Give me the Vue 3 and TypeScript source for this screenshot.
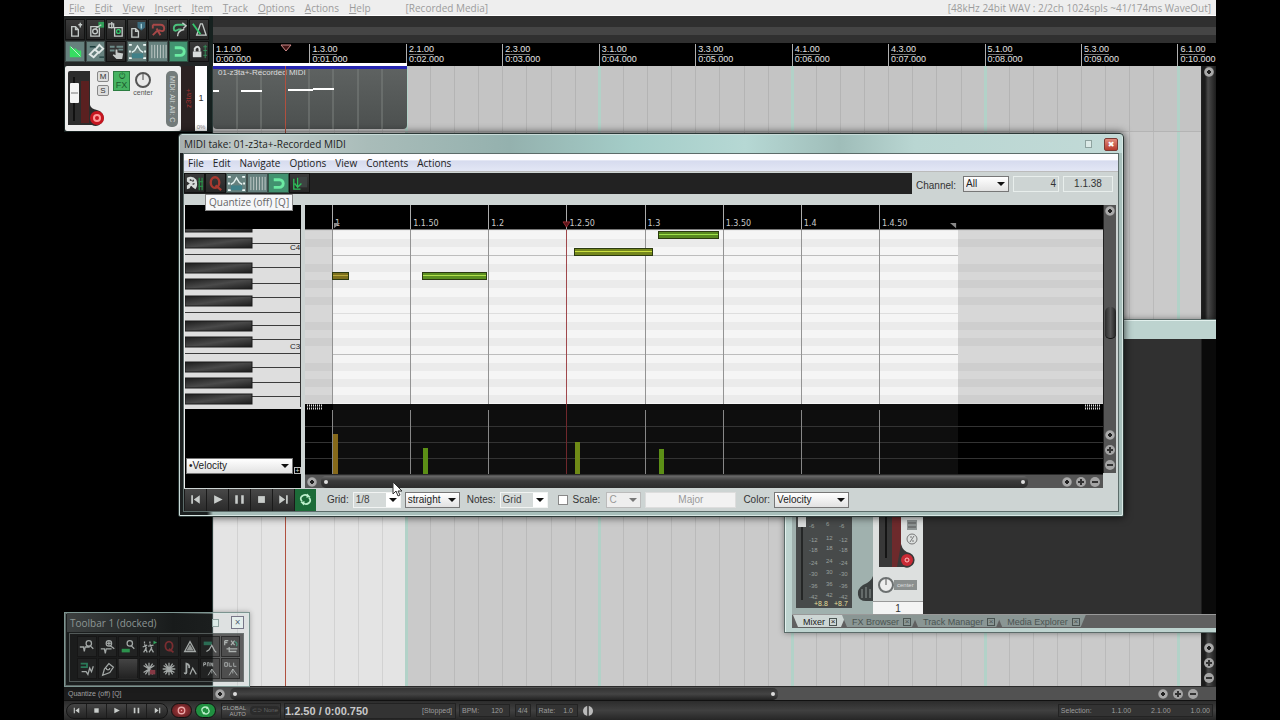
<script setup lang="ts">
import { ref } from 'vue'

interface Shape { d: string; c?: string; f?: string; w?: number }
interface Tool { name: string; shapes: Shape[]; tone?: string }

const G = '#35c46c'
const W = '#c4cac8'

const mainMenu: string[] = ['File', 'Edit', 'View', 'Insert', 'Item', 'Track', 'Options', 'Actions', 'Help']
const midiMenu: string[] = ['File', 'Edit', 'Navigate', 'Options', 'View', 'Contents', 'Actions']

const gridIcon: Shape[] = [{ d: 'M3 3V17M6 3V17M9 3V17M12 3V17M15 3V17M18 3V17', c: '#c2cac8', w: 1 }]
const snapIcon: Shape[] = [{ d: 'M5 6H11A4 4 0 0 1 11 14H5', c: '#6beaa2', w: 3 }]
const envIcon: Shape[] = [
  { d: 'M1 3H4M16 3H19M1 17H4M16 17H19M1 10H3M17 10H19', c: '#eef8f6', w: 2 },
  { d: 'M4 11L7 9L10 4L13 9L16 11', c: '#e4f2f0', w: 1.5 },
  { d: 'M4 12H16V17H4Z', f: '#3f8088' },
]

const mainTools: Tool[] = [
  { name: 'New project', shapes: [{ d: 'M6 7H10L13 10V17H6ZM10 7V10H13', c: W }, { d: 'M15 3V8M13 5H17', c: W }] },
  { name: 'Open project', shapes: [{ d: 'M4 7H13V17H4ZM6 12A2 2 0 1 0 11 12A2 2 0 1 0 6 12', c: W }, { d: 'M12 2H18V8H12Z', f: '#2f9d57' }, { d: 'M9 9L15 5', c: W }] },
  { name: 'Save project', shapes: [{ d: 'M8 8H16V17H8Z', c: W }, { d: 'M2 4H7V8H2ZM5 2V9', c: W }, { d: 'M10 12A2 2 0 1 0 14 12A2 2 0 1 0 10 12', c: G }] },
  { name: 'Project settings', shapes: [{ d: 'M4 9H8L11 12V18H4ZM8 9V12H11', c: W }, { d: 'M10 2H18V8L14 11L10 8Z', f: '#3b6b7d' }, { d: 'M14 4V9', c: '#a6d0da' }] },
  { name: 'Undo', shapes: [{ d: 'M4 5H12Q16 5 16 9T11 11L8 12L4 16M4 5V9M8 9L12 16', c: '#a84848', w: 2 }] },
  { name: 'Redo', shapes: [{ d: 'M16 5H8Q4 5 4 9T9 10H12', c: '#4cbf7b', w: 2 }, { d: 'M13 3L17 6L14 9M8 17Q8 11 15 10', c: W }] },
  { name: 'Metronome', shapes: [{ d: 'M7 16L11 4L13 4L17 16Z', c: W }, { d: 'M11 15L3 4', c: G, w: 2 }] },
  { name: 'Auto-crossfade', tone: 'on', shapes: [{ d: 'M4 16V4L9 8V6L13 9L16 9V16Z', f: '#37dd62' }, { d: 'M5 5L15 15', c: '#bff5cf', w: 1 }] },
  { name: 'Item grouping', tone: 'on', shapes: [{ d: 'M3 13L8 8L12 11L7 16ZM8 9L13 3L17 7L12 12', c: '#e0e8e6', w: 2 }, { d: 'M3 5L9 5M13 16H18', c: '#1e3f3e' }] },
  { name: 'Ripple editing', shapes: [{ d: 'M3 5H8M10 5H17M3 9H8M12 8H17', c: '#6d8a88', w: 2 }, { d: 'M9 8V14L7 13L6 14L10 18H16L17 12L11 11V8Z', f: '#c8cccb' }] },
  { name: 'Envelopes', tone: 'on', shapes: envIcon },
  { name: 'Grid', tone: 'on', shapes: gridIcon },
  { name: 'Snap', tone: 'green', shapes: snapIcon },
  { name: 'Lock', shapes: [{ d: 'M3 10H12V16H3Z', f: '#dadddc' }, { d: 'M5 10V7Q8 3 10 7V10', c: '#dadddc', w: 2 }, { d: 'M16 3V17M14 5H18M14 9H18M14 14H18', c: '#35905a', w: 1 }] },
]

const midiTools: Tool[] = [
  { name: 'Filter', shapes: [{ d: 'M2 4Q8 1 12 6Q14 12 11 16L8 14Q6 11 5 15L2 16V12L5 10L2 8Z', f: '#d8dcda' }, { d: 'M5 6L7 7M9 6L8 8M10 10L8 11', c: '#333' }, { d: 'M15 4V17M18 4V17M14 8H19M14 13H19', c: '#2b8a47' }] },
  { name: 'Quantize', shapes: [{ d: 'M5 9A4 5 0 1 0 14 9A4 5 0 1 0 5 9M10 12L16 17', c: '#a8392f', w: 2.5 }] },
  { name: 'Envelopes', tone: 'on', shapes: envIcon },
  { name: 'Grid', tone: 'on', shapes: gridIcon },
  { name: 'Snap', tone: 'green', shapes: snapIcon },
  { name: 'Step input', shapes: [{ d: 'M9 3H18V14H9Z', f: '#3d4342' }, { d: 'M4 5V16H11M8 4V13M5 10L8 14L12 10', c: '#2fc05a' }] },
]

const dockTools: Tool[] = [
  { name: 'Zoom out item', shapes: [{ d: 'M2 10L6 10L7 15L8 10H13M9 6A3 3 0 1 0 15 6A3 3 0 1 0 9 6M14 9L17 12', c: W }] },
  { name: 'Zoom selection', shapes: [{ d: 'M2 12L6 12L7 17L8 12H14M8 6A3 3 0 1 0 14 6A3 3 0 1 0 8 6M13 9L17 12M11 4V8M9 6H13', c: W }] },
  { name: 'Zoom project', shapes: [{ d: 'M9 6A3 3 0 1 0 15 6A3 3 0 1 0 9 6M14 9L17 12', c: W }, { d: 'M3 12H12V16H3Z', f: '#2fae58' }] },
  { name: 'Walk', shapes: [{ d: 'M5 4V6M5 7L7 11L4 16M6 11L8 16M3 10L8 8M11 4V6M11 7L13 11L10 16M12 11L15 16M9 9L15 8', c: W }, { d: 'M15 3L19 5L15 7Z', f: G }] },
  { name: 'Quantize', shapes: [{ d: 'M6 9A4 5 0 1 0 14 9A4 5 0 1 0 6 9M10 12L15 16', c: '#8f3034', w: 2 }] },
  { name: 'Normalize', shapes: [{ d: 'M4 15L10 4L16 15Z', c: W }, { d: 'M6 14L10 7L14 14Z', f: '#aeb3b1' }] },
  { name: 'Volume envelope', shapes: [{ d: 'M3 4H12V8H3Z', f: '#2e7f61' }, { d: 'M6 15L9 13L12 8L15 14L17 16', c: W }] },
  { name: 'Effects', shapes: [{ d: 'M3 3H7M3 3V8M3 5H6M10 3L14 8M14 3L10 8M5 12H17M8 10V15H16', c: W }, { d: 'M14 4Q18 5 16 9', c: '#45a382' }] },
  { name: 'Nudge', shapes: [{ d: 'M3 4H10V8H3', c: '#2c8f66', w: 2 }, { d: 'M4 13H9L11 16L13 9L15 13L17 7', c: W }] },
  { name: 'Pencil', shapes: [{ d: 'M4 17L6 10L11 4L16 8L12 14ZM8 9A2 2 0 1 0 12 9', c: W }] },
  { name: 'Blank', tone: 'blank', shapes: [] },
  { name: 'Freeze', shapes: [{ d: 'M4 6L16 14M16 6L4 14M10 3V17M6 4L14 16M14 4L6 16', c: W }, { d: 'M11 11H17V16H11Z', f: '#9f3f4d' }] },
  { name: 'Unfreeze', shapes: [{ d: 'M4 6L16 14M16 6L4 14M10 3V17M3 10H17M6 4L14 16M14 4L6 16', c: W }] },
  { name: 'Note envelope', shapes: [{ d: 'M6 14V4Q10 5 9 9M4 14A1 1 0 1 0 6 14', c: W, w: 2 }, { d: 'M10 16L13 9L17 16', c: W }] },
  { name: 'Pan envelope', shapes: [{ d: 'M3 3V7M3 3H5V5H3M7 7V3H9V7M11 7V3L13 7V3M8 17L12 10L17 17M12 10V15', c: W, w: 1 }] },
  { name: 'Solo envelope', shapes: [{ d: 'M3 3V7H6V3ZM8 3V7H11M13 3V7H16M8 17L12 10L17 17M12 10V15', c: W, w: 1 }] },
]

const transportIcons: Tool[] = [
  { name: 'Go to start', shapes: [{ d: 'M5 5H7V15H5ZM15 5V15L8 10Z', f: '#c9cdcb' }] },
  { name: 'Stop', shapes: [{ d: 'M6 6H14V14H6Z', f: '#c9cdcb' }] },
  { name: 'Play', shapes: [{ d: 'M6 5L16 10L6 15Z', f: '#c9cdcb' }] },
  { name: 'Pause', shapes: [{ d: 'M5 5H8V15H5ZM12 5H15V15H12Z', f: '#c9cdcb' }] },
  { name: 'Go to end', shapes: [{ d: 'M5 5L12 10L5 15ZM13 5H15V15H13Z', f: '#c9cdcb' }] },
]
const repeatShapes: Shape[] = [{ d: 'M6 12A5 4 0 0 1 13 6M14 8A5 4 0 0 1 7 14', c: '#bdf0cb', w: 2 }, { d: 'M12 3L16 7L11 8ZM8 17L4 13L9 12Z', f: '#bdf0cb' }]
const midiTransport: Tool[] = [
  transportIcons[0], transportIcons[2], transportIcons[3], transportIcons[1], transportIcons[4],
  { name: 'Repeat', tone: 'rep', shapes: repeatShapes },
]

const rulerMarks: [string, string][] = [
  ['1.1.00', '0:00.000'], ['1.3.00', '0:01.000'], ['2.1.00', '0:02.000'], ['2.3.00', '0:03.000'],
  ['3.1.00', '0:04.000'], ['3.3.00', '0:05.000'], ['4.1.00', '0:06.000'], ['4.3.00', '0:07.000'],
  ['5.1.00', '0:08.000'], ['5.3.00', '0:09.000'], ['6.1.00', '0:10.000'],
]
const midiMarks: string[] = ['1', '1.1.50', '1.2', '1.2.50', '1.3', '1.3.50', '1.4', '1.4.50']

// Arrange grid: four lines for each ruler mark.
const arrangeLines = Array.from({ length: 41 }, (_, i) => ({ x: Math.round((i * 9646) / 400), bar: i % 8 === 0 && i > 0 }))

// Piano roll rows, top of D#4 first; each row is 1/12 of an octave of 98.5px.
const rowTop = (i: number): number => (i * 98.5) / 12 - 7
const blackRows = [0, 2, 5, 7, 9, 12, 14, 17, 19, 21]
const keySplits = [14, 38, 54, 68, 83, 96, 110, 138, 153, 167]
const midiLines = Array.from({ length: 9 }, (_, i) => 28 + Math.round((i * 625) / 8))
const notes = [
  { x: 27, w: 17, row: 6, c: '#7d701d', hi: '#b8aa3a' },
  { x: 117, w: 65, row: 6, c: '#5b8f20', hi: '#b2e04c' },
  { x: 269, w: 79, row: 3, c: '#74861d', hi: '#cbe040' },
  { x: 353, w: 61, row: 1, c: '#58881f', hi: '#9fe04a' },
]
const velocities = [
  { x: 28, y: 30, c: '#86691a' }, { x: 118, y: 44, c: '#5c8f16' },
  { x: 270, y: 38, c: '#6f8a16' }, { x: 354, y: 45, c: '#5c8f16' },
]
const meterScale: [string, number][] = [['6', 10], ['12', 24], ['18', 34], ['24', 47], ['30', 58], ['36', 70], ['42', 81]]
const tabs: string[] = ['Mixer', 'FX Browser', 'Track Manager', 'Media Explorer']

const lane = ref('•Velocity')
const channel = ref('All')
const spacing = ref('straight')
const colorBy = ref('Velocity')
const gridSize = ref('1/8')
const noteSize = ref('Grid')
const root = ref('C')
const useScale = ref(false)
</script>

<template>
  <div class="app">
    <main class="daw">
      <nav class="menubar">
        <button v-for="m in mainMenu" :key="m"><u>{{ m[0] }}</u>{{ m.slice(1) }}</button>
        <span class="project">[Recorded Media]</span>
        <span class="device">[48kHz 24bit WAV : 2/2ch 1024spls ~41/174ms WaveOut]</span>
      </nav>

      <section class="workspace">
        <div class="toolbar">
          <button v-for="t in mainTools" :key="t.name" :class="['tool', t.tone]" :aria-label="t.name">
            <svg viewBox="0 0 20 20"><path v-for="s in t.shapes" :key="s.d" :d="s.d" :stroke="s.c || 'none'" :fill="s.f || 'none'" :stroke-width="s.w || 1.4" /></svg>
          </button>
        </div>

        <div class="timeline">
          <div class="band"></div>
          <div class="ruler">
            <div v-for="m in rulerMarks" :key="m[0]" class="mark"><b>{{ m[0] }}</b><span>{{ m[1] }}</span></div>
            <i class="loop"></i>
            <svg class="playmark" viewBox="0 0 12 8"><path d="M1 1H11L6 7Z" fill="#401414" stroke="#d08a8a" /></svg>
          </div>
        </div>

        <div class="tracks">
          <div class="track">
            <div class="panel">
              <svg class="fader" viewBox="0 0 38 56">
                <path d="M0 2Q0 0 2 0H22V34Q23 38 29 39A8 8 0 1 1 24 54H0Z" fill="#2c2c2c" />
                <path d="M13 10H21V52H13Z" fill="#5a2020" />
                <path d="M6 6V50" stroke="#111" stroke-width="2" />
                <rect x="2" y="12" width="9" height="20" rx="1" fill="#f4f4f4" /><path d="M3 22H10" stroke="#777" />
                <circle cx="29" cy="47" r="7" fill="#c61620" /><circle cx="29" cy="47" r="3" fill="none" stroke="#ff9a9a" stroke-width="2" />
              </svg>
              <div class="ms"><button>M</button><button>S</button></div>
              <button class="fx"><span>⏻</span>FX</button>
              <div class="pan">
                <svg viewBox="0 0 18 18"><circle cx="9" cy="9" r="7" fill="#e9e9e9" stroke="#555" stroke-width="2" /><path d="M9 3V9" stroke="#444" /></svg>
                <span>center</span>
              </div>
              <div class="input"><span>MIDI: All: All: C</span></div>
            </div>
            <div class="instr"><span>z3ta+</span></div>
            <div class="index">1<small>0%</small></div>
          </div>
        </div>

        <div class="arrange">
          <div class="canvas">
            <svg class="lines" viewBox="0 0 988 620" preserveAspectRatio="none">
              <rect width="988" height="620" fill="#cacaca" />
              <rect width="988" height="65" fill="#c4c4c4" />
              <rect y="66" width="194" height="554" fill="#e4e4e4" />
              <rect v-for="l in arrangeLines" :key="l.x" :x="l.bar ? l.x - 1 : l.x" y="0" :width="l.bar ? 3 : 1" height="620" :fill="l.bar ? '#b2d2c8' : '#000'" :opacity="l.bar ? 1 : 0.08" />
              <rect y="65" width="988" height="1" fill="#b4b4b4" />
            </svg>
            <div class="item">
              <span>01-z3ta+-Recorded MIDI</span>
              <svg viewBox="0 0 194 60" preserveAspectRatio="none">
                <path d="M24 0V60M48 0V60M96 0V60M120 0V60M145 0V60M169 0V60" stroke="#7c817f" />
                <path d="M0 22H6M28 22H49M75 21H100M100 20H121" stroke="#fff" stroke-width="2" />
              </svg>
            </div>
            <i class="playhead"></i>
          </div>
          <div class="vscroll main">
            <button class="knob up" aria-label="Scroll up"></button>
            <i class="grow"></i>
            <button class="knob down" aria-label="Scroll down"></button>
            <button class="knob plus" aria-label="Zoom in"></button>
            <button class="knob minus" aria-label="Zoom out"></button>
          </div>
        </div>

        <div class="status">Quantize (off) [Q]</div>
        <div class="hscroll main">
          <button class="knob left" aria-label="Scroll left"></button>
          <div class="thumb"><i></i><i></i></div>
          <span class="grow"></span>
          <button class="knob right" aria-label="Scroll right"></button>
          <button class="knob plus" aria-label="Zoom in"></button>
          <button class="knob minus" aria-label="Zoom out"></button>
        </div>
      </section>

      <footer class="transport">
        <div class="pill">
          <button v-for="t in transportIcons" :key="t.name" :aria-label="t.name">
            <svg viewBox="0 0 20 20"><path v-for="s in t.shapes" :key="s.d" :d="s.d" :fill="s.f" /></svg>
          </button>
        </div>
        <button class="round rec" aria-label="Record"><svg viewBox="0 0 20 20"><circle cx="10" cy="10" r="5" fill="none" stroke="#e9a9a9" stroke-width="2" /><circle cx="10" cy="10" r="1" fill="#e9a9a9" /></svg></button>
        <button class="round rep" aria-label="Repeat"><svg viewBox="0 0 20 20"><path v-for="s in repeatShapes" :key="s.d" :d="s.d" :stroke="s.c || 'none'" :fill="s.f || 'none'" :stroke-width="s.w || 1" /></svg></button>
        <button class="auto"><span>GLOBAL<br>AUTO</span><em>⊂⊃ None</em></button>
        <div class="clock"><b>1.2.50 / 0:00.750</b><span>[Stopped]</span></div>
        <div class="box">BPM:<span class="val">120</span></div>
        <div class="box">4/4</div>
        <div class="box">Rate:<span class="val near">1.0</span></div>
        <button class="rate" aria-label="Playback rate"></button>
        <div class="box sel">Selection:<span>1.1.00</span><span>2.1.00</span><span>1.0.00</span></div>
      </footer>

      <section class="mixer" aria-label="Mixer">
        <div class="mixbody">
          <div class="master">
            <svg class="meter" viewBox="0 0 56 92">
              <rect width="56" height="92" fill="#474a4a" />
              <path d="M6 0V84" stroke="#242626" stroke-width="2" />
              <rect x="2" y="0" width="8" height="11" fill="#d9dcdb" />
              <template v-for="s in meterScale" :key="s[0]">
                <text x="13" :y="s[1] + 2" class="tick">-{{ s[0] }}</text>
                <text x="30" :y="s[1]" class="tick">{{ s[0] }}</text>
                <text x="43" :y="s[1] + 2" class="tick">-{{ s[0] }}</text>
              </template>
              <text x="18" y="90" class="peak">+8.8</text><text x="38" y="90" class="peak">+8.7</text>
            </svg>
            <svg class="bars" viewBox="0 0 16 26"><path d="M16 0Q14 6 6 9Q0 13 1 19Q2 25 9 25H16Z" fill="#3c4141" /><path d="M5 13V22M9 11V22M13 13V22" stroke="#8d9694" /></svg>
          </div>
          <div class="strip">
            <svg viewBox="0 0 50 85">
              <path d="M6 0H28V28Q30 36 37 37A7 7 0 1 1 31 51H6Z" fill="#383838" />
              <path d="M19 0H28V28L24 51H19Z" fill="#6d2a2c" /><path d="M13 0V42" stroke="#151515" stroke-width="2" />
              <circle cx="34" cy="44" r="6" fill="#c92a35" /><circle cx="34" cy="44" r="2" fill="none" stroke="#ffc0c0" />
              <rect x="34" y="4" width="10" height="10" fill="#8e9493" /><path d="M35 7H43M35 11H43" stroke="#555" />
              <circle cx="39" cy="23" r="5" fill="none" stroke="#777" /><path d="M37 26L41 20M37 21H39M39 25H41" stroke="#777" />
              <circle cx="13" cy="69" r="7" fill="#eee" stroke="#6c7070" stroke-width="2" /><path d="M13 63V69" stroke="#555" />
              <rect x="21" y="64" width="23" height="10" fill="#8a8f8e" /><text x="24" y="71" class="cen">center</text>
            </svg>
            <span class="no">1</span>
          </div>
          <div class="empty"></div>
        </div>
        <nav class="tabs">
          <button v-for="(t, i) in tabs" :key="t" :class="{ active: i === 0 }"><span>{{ t }}</span><i>×</i></button>
        </nav>
      </section>

      <section class="dock" aria-label="Toolbar 1">
        <header><span>Toolbar 1 (docked)</span><i class="pin"></i><button aria-label="Close">×</button></header>
        <div class="dockgrid">
          <button v-for="(t, i) in dockTools" :key="i" :class="['dtool', t.tone]" :aria-label="t.name">
            <svg viewBox="0 0 20 20"><path v-for="s in t.shapes" :key="s.d" :d="s.d" :stroke="s.c || 'none'" :fill="s.f || 'none'" :stroke-width="s.w || 1.4" /></svg>
          </button>
        </div>
      </section>

      <section class="midi" aria-label="MIDI editor">
        <header class="title"><span>MIDI take: 01-z3ta+-Recorded MIDI</span><i class="pin"></i><button aria-label="Close">✖</button></header>
        <div class="client">
          <nav class="midimenu"><button v-for="m in midiMenu" :key="m">{{ m }}</button></nav>
          <div class="midibar">
            <div class="midtools">
              <button v-for="t in midiTools" :key="t.name" :class="['tool', t.tone]" :aria-label="t.name">
                <svg viewBox="0 0 20 20"><path v-for="s in t.shapes" :key="s.d" :d="s.d" :stroke="s.c || 'none'" :fill="s.f || 'none'" :stroke-width="s.w || 1.4" /></svg>
              </button>
            </div>
            <label class="chan" for="chan">Channel:</label>
            <div class="pick w46"><select id="chan" v-model="channel"><option>All</option></select></div>
            <output class="field right">4</output>
            <output class="field">1.1.38</output>
          </div>

          <div class="editor">
            <div class="keys">
              <div class="corner"></div>
              <svg class="piano" viewBox="0 0 116 178" preserveAspectRatio="none">
                <defs><linearGradient id="ebony" x1="0" y1="0" x2="1" y2="1"><stop offset="0" stop-color="#1c1c1c" /><stop offset="0.5" stop-color="#4a4a4a" /><stop offset="1" stop-color="#1c1c1c" /></linearGradient></defs>
                <rect width="116" height="178" fill="#dedede" />
                <path v-for="y in keySplits" :key="y" :d="`M${y === 83 ? 0 : 66} ${y}.5H116`" stroke="#3c3c3c" />
                <path d="M0 25.5H116M0 124.5H116" stroke="#3c3c3c" />
                <rect v-for="r in blackRows" :key="r" x="0" :y="Math.round(rowTop(r))" width="67" height="10" fill="url(#ebony)" stroke="#1a1a1a" />
                <text x="105" y="21" class="cname">C4</text><text x="105" y="120" class="cname">C3</text>
                <path d="M115.5 0V178" stroke="#333" />
              </svg>
              <div class="lane">
                <div class="pick velo"><select v-model="lane" aria-label="CC lane"><option>•Velocity</option></select></div>
                <button aria-label="Add lane">+</button>
              </div>
            </div>

            <div class="roll">
              <div class="mruler">
                <i></i>
                <div class="cells"><span v-for="m in midiMarks" :key="m">{{ m }}</span></div>
                <svg class="endmark" viewBox="0 0 10 8"><path d="M1 1H8V7Z" fill="#888" /></svg>
                <svg class="startmark" viewBox="0 0 10 8"><path d="M1 1H8L1 7Z" fill="#888" /></svg>
                <svg class="playflag" viewBox="0 0 10 8"><path d="M1 1H9L5 7Z" fill="#5a1418" stroke="#a03038" /></svg>
              </div>
              <svg class="notes" viewBox="0 0 798 174" preserveAspectRatio="none">
                <rect width="798" height="174" fill="#f5f5f5" />
                <rect v-for="r in blackRows" :key="r" x="0" :y="Math.round(rowTop(r))" width="798" height="8" fill="#ebebeb" />
                <rect width="28" height="174" fill="#000" opacity="0.12" /><rect x="653" width="145" height="174" fill="#000" opacity="0.12" />
                <path d="M28 25.5H653M28 124.5H653" stroke="#bdbdbd" />
                <path d="M28 83.5H653" stroke="#dedede" />
                <rect v-for="x in midiLines.slice(0, 8)" :key="x" :x="x - 1" width="1" height="174" fill="#939393" />
                <g v-for="n in notes" :key="n.x">
                  <rect :x="n.x" :y="Math.round(rowTop(n.row))" :width="n.w" height="8" fill="#2b3a10" />
                  <rect :x="n.x + 1" :y="Math.round(rowTop(n.row)) + 1" :width="n.w - 2" height="6" :fill="n.c" />
                  <rect :x="n.x + 1" :y="Math.round(rowTop(n.row)) + 3" :width="n.w - 2" height="1" :fill="n.hi" />
                </g>
                <rect x="261" width="1" height="174" fill="#a0484c" />
              </svg>
              <svg class="velocity" viewBox="0 0 798 70" preserveAspectRatio="none">
                <rect width="798" height="70" fill="#000" /><rect x="28" width="625" height="70" fill="#0e0e0e" />
                <path d="M0 22.5H798M0 38.5H798M0 54.5H798" stroke="#333" />
                <rect v-for="x in midiLines.slice(0, 8)" :key="x" :x="x - 1" y="6" width="1" height="64" fill="#878787" />
                <rect x="261" width="1" height="70" fill="#70282c" />
                <rect v-for="v in velocities" :key="v.x" :x="v.x" :y="v.y" width="5" :height="70 - v.y" :fill="v.c" />
                <path d="M2 1.5H18M2 4.5H18M780 1.5H796M780 4.5H796" stroke="#ddd" stroke-width="2" stroke-dasharray="1 1" />
              </svg>
              <div class="hscroll">
                <button class="knob left" aria-label="Scroll left"></button>
                <div class="thumb"><i></i><i></i></div>
                <span class="gap"></span>
                <button class="knob right" aria-label="Scroll right"></button>
                <button class="knob plus" aria-label="Zoom in"></button>
                <button class="knob minus" aria-label="Zoom out"></button>
              </div>
            </div>

            <div class="vscroll side">
              <button class="knob up" aria-label="Scroll up"></button>
              <i class="grow"></i><i class="vthumb"></i><i class="grow"></i>
              <button class="knob down" aria-label="Scroll down"></button>
              <button class="knob plus" aria-label="Zoom in"></button>
              <button class="knob minus" aria-label="Zoom out"></button>
            </div>
          </div>

          <div class="foot">
            <div class="mtrans">
              <button v-for="t in midiTransport" :key="t.name" :class="t.tone" :aria-label="t.name">
                <svg viewBox="0 0 20 20"><path v-for="s in t.shapes" :key="s.d" :d="s.d" :stroke="s.c || 'none'" :fill="s.f || 'none'" :stroke-width="s.w || 1" /></svg>
              </button>
            </div>
            <label for="gridsize" class="lab">Grid:</label>
            <div class="pick combo"><select id="gridsize" v-model="gridSize"><option>1/8</option></select></div>
            <div class="pick w54"><select v-model="spacing" aria-label="Grid type"><option>straight</option></select></div>
            <label for="notesize" class="lab">Notes:</label>
            <div class="pick combo"><select id="notesize" v-model="noteSize"><option>Grid</option></select></div>
            <label class="lab check"><input v-model="useScale" type="checkbox">Scale:</label>
            <div class="pick off"><select v-model="root" disabled aria-label="Root"><option>C</option></select></div>
            <button class="major" disabled>Major</button>
            <label for="color" class="lab">Color:</label>
            <div class="pick w74"><select id="color" v-model="colorBy"><option>Velocity</option></select></div>
          </div>
        </div>
        <div class="tip" role="tooltip">Quantize (off) [Q]</div>
      </section>

      <svg class="cursor" viewBox="0 0 12 17"><path d="M1 1V13L4 10L6 15L8 14L6 10H10Z" fill="#fff" stroke="#333" /></svg>
    </main>
  </div>
</template>

<style>
html, body { background: #000; }
</style>

<style scoped>
* { box-sizing: border-box; }
button, select, input { font: inherit; color: inherit; margin: 0; padding: 0; border: 0; background: none; border-radius: 0; }
svg { display: block; }
i, em { font-style: normal; }
.app { min-height: 100vh; padding: 0 64px; background: #000; display: flex; font: 10px "Liberation Sans", Arial, sans-serif; }
.daw { flex: 1; min-width: 0; position: relative; overflow: hidden; display: flex; flex-direction: column; }

.menubar { height: 16px; background: #eeeeee; color: #9c9c9c; display: flex; align-items: center; gap: 10px; padding: 0 5px; font: 10px/14px "Open Sans", sans-serif; white-space: nowrap; border-bottom: 1px solid #fff; }
.project { margin-left: 25px; }
.device { margin-left: auto; }

.workspace { flex: 1; min-height: 0; display: grid; grid-template-columns: 149px minmax(0, 1fr); grid-template-rows: 50px minmax(0, 1fr) 14px; }
.toolbar { background: #232626; border-right: 4px solid #16211f; padding: 3px 0 4px 1px; display: grid; grid-template-columns: repeat(7, 1fr); grid-template-rows: 1fr 1fr; gap: 1px; }
.tool { background: linear-gradient(#3a3a3a, #262626); border: 1px solid #121212; padding: 0; display: grid; place-items: center; min-width: 0; }
.tool svg { width: 19px; height: 19px; }
.tool.on { background: #66817e; border-color: #3f4c4a; }
.tool.green { background: #429270; border-color: #2e5444; }

.timeline { display: flex; flex-direction: column; min-width: 0; }
.band { height: 27px; background: linear-gradient(#2f2f2f 0 11px, #454545 11px 19px, #303030 19px); }
.ruler { flex: 1; position: relative; background: #000; display: grid; grid-template-columns: repeat(10, minmax(0, 25fr)) minmax(0, 10fr); color: #e0e0e0; font: 9px/9px "Liberation Sans", sans-serif; }
.mark { border-left: 1px solid #b0b0b0; margin-top: 1px; padding: 1px 0 0 2px; display: flex; flex-direction: column; align-items: flex-start; white-space: nowrap; }
.mark b { font-weight: normal; border-bottom: 1px solid #777; }
.mark span { line-height: 8px; }
.loop { position: absolute; left: 0; bottom: 0; width: 194px; height: 3px; background: #fff; }
.playmark { position: absolute; left: 67px; top: 1px; width: 12px; height: 8px; }

.tracks { background: #000; border-right: 1px solid #2a3a38; }
.track { height: 66px; padding: 0 5px 1px 1px; display: flex; background: #16211f; }
.panel { width: 117px; background: #ededed; border-radius: 2px; display: flex; align-items: flex-start; padding: 5px 3px; gap: 2px; color: #333; }
.fader { width: 38px; height: 56px; margin-right: -11px; }
.ms { display: grid; gap: 3px; font-size: 8px; }
.ms button { width: 12px; height: 11px; line-height: 9px; background: #ddd; border: 1px solid #888; border-radius: 2px; }
.fx { width: 17px; height: 20px; margin: 0 1px 0 2px; background: #45b361; border: 1px solid #2b7d41; color: #1c5a2d; font-size: 9px; line-height: 9px; }
.fx span { display: block; font: 8px/8px "DejaVu Sans"; }
.pan { width: 20px; text-align: center; font-size: 7px; color: #555; }
.pan svg { width: 18px; height: 18px; margin: 0 auto; }
.input { width: 12px; height: 56px; margin-left: auto; background: #737b7a; border-radius: 5px; color: #d4dad8; font-size: 7px; line-height: 12px; writing-mode: vertical-rl; overflow: hidden; text-align: center; }
.instr { width: 14px; background: #2b2222; color: #a03030; font-size: 8px; writing-mode: vertical-rl; transform: rotate(180deg); display: grid; place-items: center; }
.index { width: 12px; background: #fff; color: #333; display: flex; flex-direction: column; justify-content: flex-end; align-items: center; gap: 20px; font-size: 9px; line-height: 10px; }
.index small { font-size: 6px; line-height: 8px; color: #888; }

.arrange { display: flex; min-width: 0; min-height: 0; }
.canvas { flex: 1; position: relative; min-width: 0; overflow: hidden; }
.lines { position: absolute; inset: 0; width: 100%; height: 100%; }
.item { position: absolute; left: 0; top: 0; width: 194px; height: 63px; background: linear-gradient(#5e6261, #4c504f); border-top: 3px solid #2626b0; border-radius: 0 0 4px 4px; }
.item span { position: absolute; left: 5px; top: 0; color: #dcdcdc; font: 8px/8px "Liberation Sans", sans-serif; }
.item svg { width: 100%; height: 60px; }
.playhead { position: absolute; left: 72px; top: 0; bottom: 0; width: 1px; background: #b0503f; }

.vscroll { width: 13px; background: #555; display: flex; flex-direction: column; align-items: center; gap: 5px; padding: 1px 0 3px; flex: none; border-left: 1px solid #222; }
.vscroll.main { width: 15px; background: linear-gradient(90deg, #1c1c1c 3px, #4a4a4a 6px, #1c1c1c); }
.vscroll.side { margin: 0 2px 15px 0; }
.grow { flex: 1; }
.vthumb { width: 11px; height: 32px; border-radius: 5px; background: linear-gradient(90deg, #2c2c2c, #555, #222); border-bottom: 1px solid #111; }
.knob { width: 10px; height: 10px; flex: none; border-radius: 50%; background: radial-gradient(circle, #222 0 2px, #aaa 2px 4px, #777 5px); }
.knob.plus { background: linear-gradient(#333, #333) center / 6px 2px no-repeat, linear-gradient(#333, #333) center / 2px 6px no-repeat, #a4a4a4; }
.knob.minus { background: linear-gradient(#333, #333) center / 6px 2px no-repeat, #a4a4a4; }
.hscroll { height: 14px; background: #555; display: flex; align-items: center; gap: 4px; padding: 0 3px 0 2px; border-top: 1px solid #2a2a2a; }
.hscroll.main { background: #525252; padding-right: 18px; gap: 5px; }
.thumb { flex: 0 1 auto; height: 12px; border-radius: 5px; background: linear-gradient(#6a6a6a, #3a3a3a 40%, #2c2c2c); display: flex; justify-content: space-between; align-items: center; padding: 0 3px; }
.hscroll.main .thumb { width: 548px; background: linear-gradient(#333, #444 50%, #222); }
.roll .thumb { flex: 1; }
.roll .gap { width: 26px; }
.thumb i { width: 4px; height: 4px; border-radius: 50%; background: #ddd; }
.status { background: #1c1c1c; color: #a0a0a0; font-size: 7px; line-height: 16px; padding-left: 4px; }

.transport { height: 20px; background: linear-gradient(#2c2c2c, #404040 50%, #262626); display: flex; align-items: center; gap: 3px; padding: 0 3px 0 2px; color: #9d9d9d; font-size: 7px; border-top: 1px solid #111; }
.pill { display: flex; border: 1px solid #151515; border-radius: 8px; background: linear-gradient(#444, #242424); }
.pill button { width: 20px; height: 14px; display: grid; place-items: center; border-right: 1px solid #1c1c1c; }
.pill button:last-child { border: 0; }
.pill svg { width: 11px; height: 11px; }
.round { width: 21px; height: 15px; border-radius: 8px; display: grid; place-items: center; border: 1px solid #111; }
.round svg { width: 13px; height: 13px; }
.rec { background: radial-gradient(#b03a3e, #4e1a1c); }
.rep { background: #209040; }
.auto { width: 60px; height: 16px; border: 1px solid #222; margin-left: 2px; display: flex; gap: 4px; text-align: right; line-height: 6px; font-size: 6px; align-items: center; color: #aaa; }
.auto em { flex: 1; background: #2b2b2b; color: #666; line-height: 9px; text-align: left; padding-left: 2px; border-radius: 4px; }
.clock { width: 172px; height: 16px; border: 1px solid #222; background: #333; display: flex; align-items: center; justify-content: space-between; padding-right: 3px; }
.clock b { font-size: 11px; color: #c9c9c9; }
.clock span { font-size: 7px; }
.box { height: 13px; line-height: 11px; border: 1px solid #232323; background: #333; padding: 0 2px; white-space: nowrap; margin-right: 2px; }
.val { margin: 0 4px 0 12px; }
.near { margin: 0 2px 0 8px; }
.rate { width: 10px; height: 10px; border-radius: 50%; background: linear-gradient(90deg, #bbb 4px, #555 4px 6px, #bbb 6px); }
.box.sel { margin: 0 0 0 auto; display: flex; gap: 20px; }

.mixer { position: absolute; left: 720px; right: 0; top: 319px; height: 314px; background: #bdd3cf; border: 1px solid #5b6b69; border-right: 0; padding: 19px 0 4px 7px; display: flex; flex-direction: column; box-shadow: inset 1px 1px 0 #e2f0ed, 0 0 6px rgba(0, 0, 0, .4); }
.mixbody { flex: 1; display: flex; align-items: stretch; background: #303030; min-height: 0; }
.master { width: 81px; background: #a0b1ae; display: flex; align-items: flex-end; padding: 0 0 6px 4px; justify-content: space-between; }
.meter { width: 56px; height: 92px; }
.bars { width: 16px; height: 26px; margin-bottom: 6px; }
.tick { font: 6px "Liberation Sans", sans-serif; fill: #9aa09e; }
.peak { font: 7px "Liberation Sans", sans-serif; fill: #e2df9a; }
.cen { font: 6px "Liberation Sans", sans-serif; fill: #ddd; }
.strip { width: 50px; background: #dde0df; display: flex; flex-direction: column; justify-content: flex-end; }
.strip svg { width: 50px; height: 85px; }
.no { height: 13px; background: #f4f4f4; border-top: 1px solid #999; text-align: center; line-height: 13px; color: #333; }
.empty { flex: 1; background: linear-gradient(90deg, transparent calc(100% - 15px), #0a0a0a calc(100% - 14px)); }
.tabs { height: 14px; background: #606060; border-top: 1px solid #999; display: flex; flex: none; padding-left: 1px; }
.tabs button { display: flex; align-items: center; gap: 4px; padding: 2px 6px 0 10px; margin-right: -4px; background: #8a9694; color: #4a5452; clip-path: polygon(0 0, 100% 0, calc(100% - 5px) 100%, 5px 100%); font-size: 9px; height: 12px; line-height: 11px; white-space: nowrap; }
.tabs .active { background: #cdd6d4; color: #222; padding-right: 9px; }
.tabs i { width: 8px; height: 8px; border: 1px solid #4a5452; font-size: 8px; line-height: 6px; text-align: center; }

.dock { position: absolute; left: 0; top: 612px; width: 186px; height: 75px; background: rgba(190, 215, 211, .14); border: 1px solid #7c9490; box-shadow: inset 0 0 0 1px rgba(215, 240, 235, .35), 0 0 5px rgba(0, 0, 0, .3); padding: 0 5px 4px 4px; display: flex; flex-direction: column; }
.dock header { height: 19px; display: flex; align-items: center; font: 10px/18px "Open Sans", sans-serif; color: #8d9694; background: linear-gradient(90deg, #3c4040, #181b1b 60%, transparent 82%); margin: 0 0 1px -2px; }
.dock header span { flex: 1; padding-left: 3px; }
.dock header button { width: 13px; height: 13px; border: 1px solid #778; background: #e4eeec; color: #567; line-height: 9px; }
.pin { width: 7px; height: 8px; border: 1px solid #8fa3a0; background: #dceae7; margin-right: 12px; }
.dockgrid { flex: 1; background: rgba(28, 28, 28, .66); border: 1px solid rgba(120, 130, 128, .6); padding: 2px 3px 2px 7px; display: grid; grid-template-columns: repeat(8, 1fr); grid-template-rows: 1fr 1fr; gap: 1px; }
.dtool { display: grid; place-items: center; background: rgba(50, 50, 50, .35); border: 1px solid rgba(10, 10, 10, .5); min-width: 0; }
.dtool svg { width: 18px; height: 18px; opacity: .8; }
.dtool.blank { background: linear-gradient(#444, #222); }

.midi { position: absolute; left: 114px; right: 92px; top: 133px; border: 1px solid #2c3937; border-radius: 4px 4px 2px 2px; background: linear-gradient(90deg, #1b1f1f 28px, #a8bfbb 34px); padding: 0 4px 4px; box-shadow: inset 1px 1px 0 #c9dbd8, inset -1px -1px 0 #d9e8e5, 0 0 9px rgba(0, 0, 0, .75); }
.title { height: 18px; margin: 1px -3px 0; padding: 0 4px; display: flex; align-items: center; color: #1d2322; font: 10px/18px "Open Sans", sans-serif; background: linear-gradient(90deg, #a8b0af, #c3cecc 8%, #a9bcb9 20%, #94b1ae 35%, #a4cdc8 48%, #b6d8d4 60%, #9fbdb9 70%, #b9d6d2 78%, #c2dad7); }
.title span { flex: 1; }
.title button { width: 14px; height: 13px; background: linear-gradient(#e08a7c, #b63a2c); border: 1px solid #7b3a34; border-radius: 2px; color: #fff; font: 8px/9px "DejaVu Sans", sans-serif; }
.client { border: 1px solid #5c6c6a; background: #cdd4d3; }
.midimenu { height: 18px; display: flex; align-items: center; gap: 9px; padding: 0 4px; background: linear-gradient(#fdfdff 35%, #d6dbee 40%, #e3e7f5); color: #222; font: 10px/16px "Open Sans", sans-serif; border-bottom: 1px solid #bbb; }
.midibar { height: 33px; padding: 1px 5px 11px 0; display: flex; align-items: center; color: #333; }
.midtools { flex: 1; height: 21px; background: #222; display: flex; }
.midtools .tool { width: 21px; height: 20px; }
.chan { padding: 3px 7px 0 4px; }
.pick { position: relative; height: 16px; background: linear-gradient(#fff, #e2e2e2); border: 1px solid #777; color: #222; }
.pick::after { content: ""; position: absolute; right: 3px; top: 5px; border: 4px solid transparent; border-top: 4px solid #111; border-bottom: 0; pointer-events: none; }
.pick select { appearance: none; width: 100%; height: 100%; padding: 0 2px; line-height: 14px; outline: 0; display: block; }
.w46 { width: 46px; }
.w54 { width: 55px; }
.w74 { width: 75px; }
.field { width: 46px; height: 16px; border: 1px solid #e8eeec; margin-left: 4px; line-height: 14px; text-align: center; font-size: 10px; }
.field.right { text-align: right; padding-right: 2px; }
.field + .field { width: 50px; }

.editor { display: flex; align-items: stretch; }
.keys { width: 121px; padding-right: 4px; display: flex; flex-direction: column; background: #cdd4d3; border-left: 1px solid #eee; }
.corner { height: 24px; background: #000; }
.piano { width: 100%; height: 178px; }
.cname { font: 8px "Liberation Sans", sans-serif; fill: #222; }
.lane { flex: 1; background: #000; border-top: 2px solid #ddd; display: flex; align-items: flex-end; gap: 1px; padding: 0 0 14px 1px; }
.velo { flex: 1; }
.lane button { width: 7px; height: 7px; border: 1px solid #bbb; color: #ddd; font-size: 7px; line-height: 4px; }
.roll { flex: 1; min-width: 0; display: flex; flex-direction: column; }
.mruler { position: relative; height: 25px; background: #000; display: grid; grid-template-columns: minmax(0, 27fr) minmax(0, 625fr) minmax(0, 146fr); border-bottom: 1px solid #777; }
.cells { display: grid; grid-template-columns: repeat(8, minmax(0, 1fr)); }
.cells span { border-left: 1px solid #aaa; padding: 13px 0 0 2px; color: #c8c8c8; font: 8px/11px "DejaVu Sans", sans-serif; }
.endmark { width: 9px; height: 7px; align-self: end; margin-left: -8px; }
.startmark { position: absolute; left: 28px; bottom: 0; width: 9px; height: 7px; }
.playflag { position: absolute; left: 257px; bottom: 1px; width: 9px; height: 7px; }
.notes { width: 100%; height: 174px; }
.velocity { width: 100%; height: 70px; }
.foot { height: 23px; display: flex; align-items: center; color: #333; }
.mtrans { display: flex; background: #1a1a1a; margin-right: 11px; height: 22px; padding-left: 1px; }
.mtrans button { width: 21px; margin-right: 1px; display: grid; place-items: center; background: linear-gradient(#484848, #2a2a2a); }
.mtrans svg { width: 17px; height: 17px; }
.mtrans .rep { background: #1c6b38; margin: 0; }
.lab { margin-right: 4px; }
.combo { width: 48px; margin-right: 4px; background: linear-gradient(90deg, #d5dad9 70%, #fff 70%); border-color: #f2f4f3; color: #444; }
.pick.w54 { margin-right: 7px; }
.check { display: flex; align-items: center; gap: 5px; margin-left: 6px; margin-right: 6px; }
.check input { appearance: none; width: 10px; height: 10px; background: #fff; border: 1px solid #888; }
.off { width: 35px; border-color: #bbb; color: #999; background: #eee; margin-right: 4px; }
.off::after { border-top-color: #777; }
.off select { opacity: 1; }
.major { width: 91px; height: 16px; background: #f2f2f2; border: 1px solid #ddd; color: #999; margin-right: 7px; }
.tip { position: absolute; left: 26px; top: 60px; height: 17px; padding: 0 3px; background: #f6f7f9; border: 1px solid #888; color: #666; font: 10px/15px "Open Sans", sans-serif; white-space: nowrap; }
.cursor { position: absolute; left: 328px; top: 481px; width: 12px; height: 17px; }
</style>
